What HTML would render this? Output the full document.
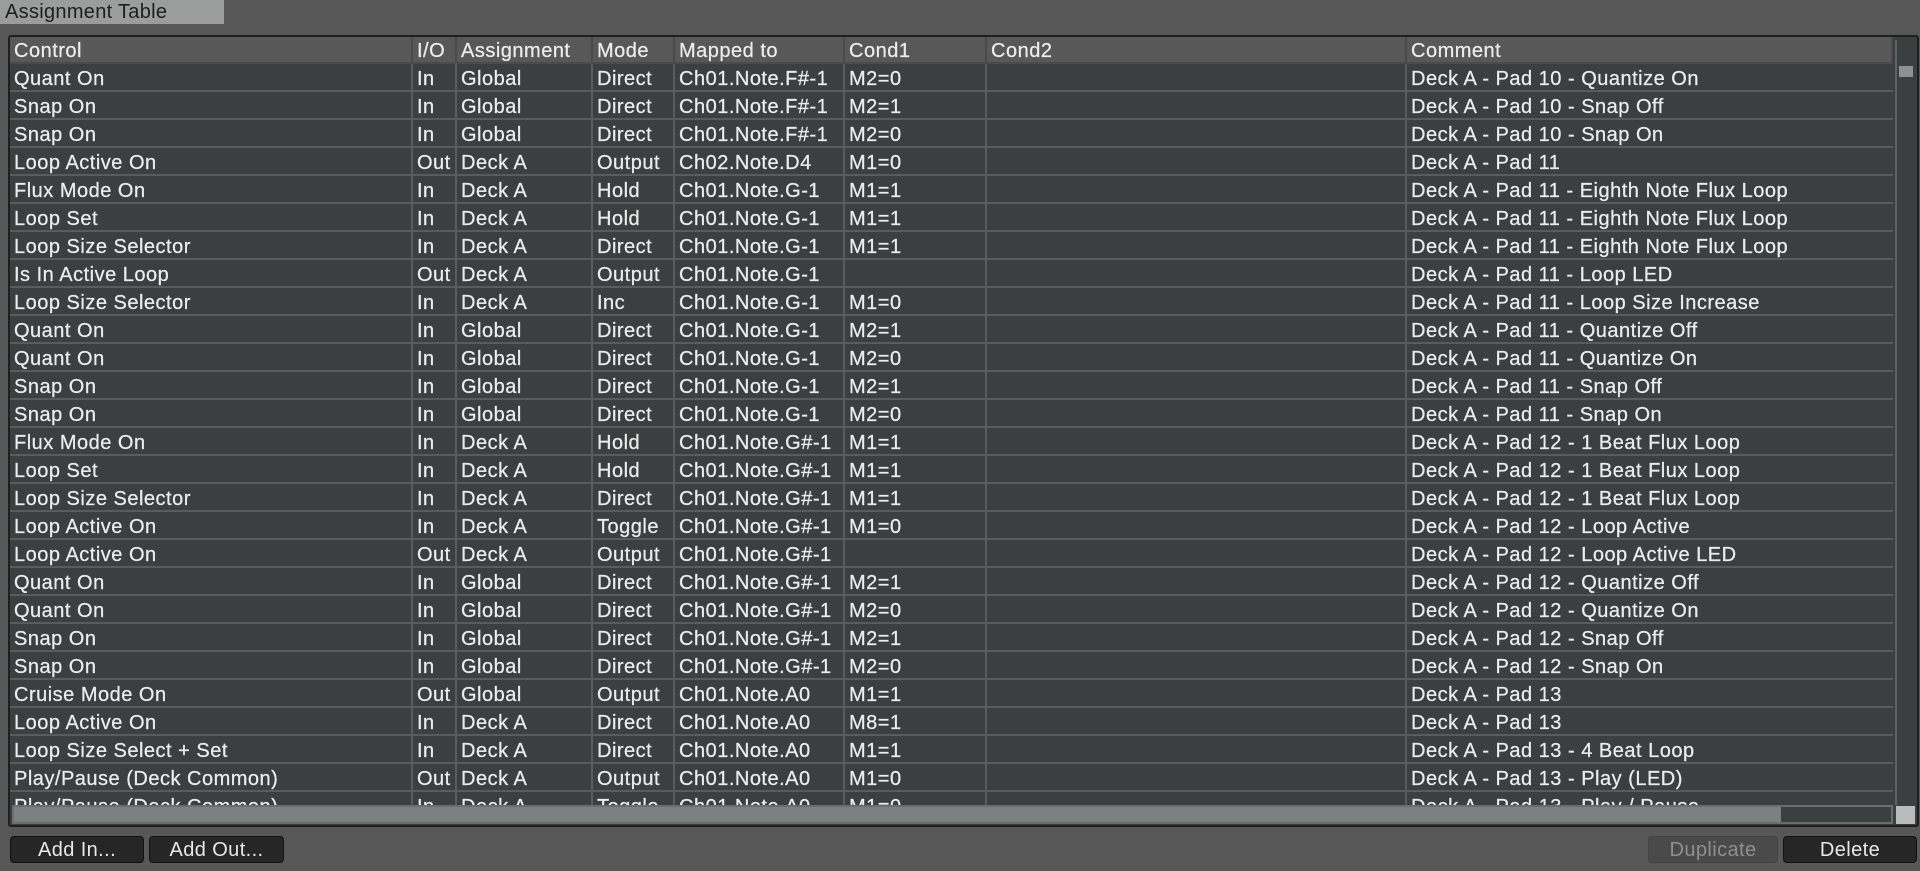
<!DOCTYPE html>
<html><head><meta charset="utf-8"><style>
*{margin:0;padding:0;box-sizing:border-box}
body{width:1920px;height:871px;background:#575757;font-family:"Liberation Sans",Arial,sans-serif;overflow:hidden;position:relative;color:#ececec}
.tab{position:absolute;left:0;top:0;width:224px;height:24px;background:#9a9d9c;color:#1e1e1e;font-size:20px;line-height:25px;padding-left:5px;letter-spacing:0.3px}
.frame{position:absolute;left:8px;top:35px;width:1911px;height:792px;border:2px solid #1f1f1f;border-radius:3px;background:#3c3f40}
.clip{position:absolute;left:10px;top:37px;width:1883px;height:768px;overflow:hidden}
.row{position:absolute;left:0;width:1883px;height:28px;border-bottom:2px solid #5a5c5c;background:#3c3f40}
.hdr{position:absolute;left:0;top:0;width:1883px;height:27px;background:#585858;border-bottom:2px solid #4a4c4c}
.c{position:absolute;top:0;height:100%;padding-left:4px;padding-top:2px;font-size:20px;letter-spacing:0.5px;line-height:26px;white-space:nowrap;overflow:hidden;border-right:2px solid #5a5c5c;-webkit-text-stroke:0.25px #ececec}
.hdr .c{line-height:27px;padding-top:1px;border-right:2px solid #4a4a4a}
.c1{left:0;width:403px}.c2{left:403px;width:44px}.c3{left:447px;width:136px}.c4{left:583px;width:82px}.c5{left:665px;width:170px}.c6{left:835px;width:142px}.c7{left:977px;width:420px}.c8{left:1397px;width:486px;border-right:none}
.vs{position:absolute;left:1895px;top:40px;width:20px;height:765px;background:#3c3f40;border-left:2px solid #5f6262}
.vthumb{position:absolute;left:1899px;top:66px;width:14px;height:11px;background:#8c9191}
.hs{position:absolute;left:12px;top:805px;width:1881px;height:19px;border:2px solid #6a6d6d;background:#3c3f40}
.hthumb{position:absolute;left:14px;top:807px;width:1767px;height:15px;background:#7c8080}
.corner{position:absolute;left:1896px;top:806px;width:19px;height:18px;background:#b8bbbb}
.btn{position:absolute;top:836px;height:27px;border-radius:4px;background:#262626;border:1px solid #111;color:#e8e8e8;font-size:20px;letter-spacing:0.4px;line-height:27px;text-align:center}
.dis{background:#4a4a4a;color:#8f8f8f;border-color:#444}
</style></head><body>
<div class="tab">Assignment Table</div>
<div class="frame"></div>
<div class="clip" id="t">
<div class="hdr"><div class="c c1">Control</div><div class="c c2">I/O</div><div class="c c3">Assignment</div><div class="c c4">Mode</div><div class="c c5">Mapped to</div><div class="c c6">Cond1</div><div class="c c7">Cond2</div><div class="c c8">Comment</div></div>
<div class="row" style="top:27px"><div class="c c1">Quant On</div><div class="c c2">In</div><div class="c c3">Global</div><div class="c c4">Direct</div><div class="c c5">Ch01.Note.F#-1</div><div class="c c6">M2=0</div><div class="c c7"></div><div class="c c8">Deck A - Pad 10 - Quantize On</div></div>
<div class="row" style="top:55px"><div class="c c1">Snap On</div><div class="c c2">In</div><div class="c c3">Global</div><div class="c c4">Direct</div><div class="c c5">Ch01.Note.F#-1</div><div class="c c6">M2=1</div><div class="c c7"></div><div class="c c8">Deck A - Pad 10 - Snap Off</div></div>
<div class="row" style="top:83px"><div class="c c1">Snap On</div><div class="c c2">In</div><div class="c c3">Global</div><div class="c c4">Direct</div><div class="c c5">Ch01.Note.F#-1</div><div class="c c6">M2=0</div><div class="c c7"></div><div class="c c8">Deck A - Pad 10 - Snap On</div></div>
<div class="row" style="top:111px"><div class="c c1">Loop Active On</div><div class="c c2">Out</div><div class="c c3">Deck A</div><div class="c c4">Output</div><div class="c c5">Ch02.Note.D4</div><div class="c c6">M1=0</div><div class="c c7"></div><div class="c c8">Deck A - Pad 11</div></div>
<div class="row" style="top:139px"><div class="c c1">Flux Mode On</div><div class="c c2">In</div><div class="c c3">Deck A</div><div class="c c4">Hold</div><div class="c c5">Ch01.Note.G-1</div><div class="c c6">M1=1</div><div class="c c7"></div><div class="c c8">Deck A - Pad 11 - Eighth Note Flux Loop</div></div>
<div class="row" style="top:167px"><div class="c c1">Loop Set</div><div class="c c2">In</div><div class="c c3">Deck A</div><div class="c c4">Hold</div><div class="c c5">Ch01.Note.G-1</div><div class="c c6">M1=1</div><div class="c c7"></div><div class="c c8">Deck A - Pad 11 - Eighth Note Flux Loop</div></div>
<div class="row" style="top:195px"><div class="c c1">Loop Size Selector</div><div class="c c2">In</div><div class="c c3">Deck A</div><div class="c c4">Direct</div><div class="c c5">Ch01.Note.G-1</div><div class="c c6">M1=1</div><div class="c c7"></div><div class="c c8">Deck A - Pad 11 - Eighth Note Flux Loop</div></div>
<div class="row" style="top:223px"><div class="c c1">Is In Active Loop</div><div class="c c2">Out</div><div class="c c3">Deck A</div><div class="c c4">Output</div><div class="c c5">Ch01.Note.G-1</div><div class="c c6"></div><div class="c c7"></div><div class="c c8">Deck A - Pad 11 - Loop LED</div></div>
<div class="row" style="top:251px"><div class="c c1">Loop Size Selector</div><div class="c c2">In</div><div class="c c3">Deck A</div><div class="c c4">Inc</div><div class="c c5">Ch01.Note.G-1</div><div class="c c6">M1=0</div><div class="c c7"></div><div class="c c8">Deck A - Pad 11 - Loop Size Increase</div></div>
<div class="row" style="top:279px"><div class="c c1">Quant On</div><div class="c c2">In</div><div class="c c3">Global</div><div class="c c4">Direct</div><div class="c c5">Ch01.Note.G-1</div><div class="c c6">M2=1</div><div class="c c7"></div><div class="c c8">Deck A - Pad 11 - Quantize Off</div></div>
<div class="row" style="top:307px"><div class="c c1">Quant On</div><div class="c c2">In</div><div class="c c3">Global</div><div class="c c4">Direct</div><div class="c c5">Ch01.Note.G-1</div><div class="c c6">M2=0</div><div class="c c7"></div><div class="c c8">Deck A - Pad 11 - Quantize On</div></div>
<div class="row" style="top:335px"><div class="c c1">Snap On</div><div class="c c2">In</div><div class="c c3">Global</div><div class="c c4">Direct</div><div class="c c5">Ch01.Note.G-1</div><div class="c c6">M2=1</div><div class="c c7"></div><div class="c c8">Deck A - Pad 11 - Snap Off</div></div>
<div class="row" style="top:363px"><div class="c c1">Snap On</div><div class="c c2">In</div><div class="c c3">Global</div><div class="c c4">Direct</div><div class="c c5">Ch01.Note.G-1</div><div class="c c6">M2=0</div><div class="c c7"></div><div class="c c8">Deck A - Pad 11 - Snap On</div></div>
<div class="row" style="top:391px"><div class="c c1">Flux Mode On</div><div class="c c2">In</div><div class="c c3">Deck A</div><div class="c c4">Hold</div><div class="c c5">Ch01.Note.G#-1</div><div class="c c6">M1=1</div><div class="c c7"></div><div class="c c8">Deck A - Pad 12 - 1 Beat Flux Loop</div></div>
<div class="row" style="top:419px"><div class="c c1">Loop Set</div><div class="c c2">In</div><div class="c c3">Deck A</div><div class="c c4">Hold</div><div class="c c5">Ch01.Note.G#-1</div><div class="c c6">M1=1</div><div class="c c7"></div><div class="c c8">Deck A - Pad 12 - 1 Beat Flux Loop</div></div>
<div class="row" style="top:447px"><div class="c c1">Loop Size Selector</div><div class="c c2">In</div><div class="c c3">Deck A</div><div class="c c4">Direct</div><div class="c c5">Ch01.Note.G#-1</div><div class="c c6">M1=1</div><div class="c c7"></div><div class="c c8">Deck A - Pad 12 - 1 Beat Flux Loop</div></div>
<div class="row" style="top:475px"><div class="c c1">Loop Active On</div><div class="c c2">In</div><div class="c c3">Deck A</div><div class="c c4">Toggle</div><div class="c c5">Ch01.Note.G#-1</div><div class="c c6">M1=0</div><div class="c c7"></div><div class="c c8">Deck A - Pad 12 - Loop Active</div></div>
<div class="row" style="top:503px"><div class="c c1">Loop Active On</div><div class="c c2">Out</div><div class="c c3">Deck A</div><div class="c c4">Output</div><div class="c c5">Ch01.Note.G#-1</div><div class="c c6"></div><div class="c c7"></div><div class="c c8">Deck A - Pad 12 - Loop Active LED</div></div>
<div class="row" style="top:531px"><div class="c c1">Quant On</div><div class="c c2">In</div><div class="c c3">Global</div><div class="c c4">Direct</div><div class="c c5">Ch01.Note.G#-1</div><div class="c c6">M2=1</div><div class="c c7"></div><div class="c c8">Deck A - Pad 12 - Quantize Off</div></div>
<div class="row" style="top:559px"><div class="c c1">Quant On</div><div class="c c2">In</div><div class="c c3">Global</div><div class="c c4">Direct</div><div class="c c5">Ch01.Note.G#-1</div><div class="c c6">M2=0</div><div class="c c7"></div><div class="c c8">Deck A - Pad 12 - Quantize On</div></div>
<div class="row" style="top:587px"><div class="c c1">Snap On</div><div class="c c2">In</div><div class="c c3">Global</div><div class="c c4">Direct</div><div class="c c5">Ch01.Note.G#-1</div><div class="c c6">M2=1</div><div class="c c7"></div><div class="c c8">Deck A - Pad 12 - Snap Off</div></div>
<div class="row" style="top:615px"><div class="c c1">Snap On</div><div class="c c2">In</div><div class="c c3">Global</div><div class="c c4">Direct</div><div class="c c5">Ch01.Note.G#-1</div><div class="c c6">M2=0</div><div class="c c7"></div><div class="c c8">Deck A - Pad 12 - Snap On</div></div>
<div class="row" style="top:643px"><div class="c c1">Cruise Mode On</div><div class="c c2">Out</div><div class="c c3">Global</div><div class="c c4">Output</div><div class="c c5">Ch01.Note.A0</div><div class="c c6">M1=1</div><div class="c c7"></div><div class="c c8">Deck A - Pad 13</div></div>
<div class="row" style="top:671px"><div class="c c1">Loop Active On</div><div class="c c2">In</div><div class="c c3">Deck A</div><div class="c c4">Direct</div><div class="c c5">Ch01.Note.A0</div><div class="c c6">M8=1</div><div class="c c7"></div><div class="c c8">Deck A - Pad 13</div></div>
<div class="row" style="top:699px"><div class="c c1">Loop Size Select + Set</div><div class="c c2">In</div><div class="c c3">Deck A</div><div class="c c4">Direct</div><div class="c c5">Ch01.Note.A0</div><div class="c c6">M1=1</div><div class="c c7"></div><div class="c c8">Deck A - Pad 13 - 4 Beat Loop</div></div>
<div class="row" style="top:727px"><div class="c c1">Play/Pause (Deck Common)</div><div class="c c2">Out</div><div class="c c3">Deck A</div><div class="c c4">Output</div><div class="c c5">Ch01.Note.A0</div><div class="c c6">M1=0</div><div class="c c7"></div><div class="c c8">Deck A - Pad 13 - Play (LED)</div></div>
<div class="row" style="top:755px"><div class="c c1">Play/Pause (Deck Common)</div><div class="c c2">In</div><div class="c c3">Deck A</div><div class="c c4">Toggle</div><div class="c c5">Ch01.Note.A0</div><div class="c c6">M1=0</div><div class="c c7"></div><div class="c c8">Deck A - Pad 13 - Play / Pause</div></div>
</div>
<div class="vs"></div><div class="vthumb"></div>
<div class="hs"></div><div class="hthumb"></div><div class="corner"></div>
<div class="btn" style="left:10px;width:134px">Add In...</div>
<div class="btn" style="left:149px;width:135px">Add Out...</div>
<div class="btn dis" style="left:1648px;width:130px">Duplicate</div>
<div class="btn" style="left:1783px;width:134px">Delete</div>
</body></html>
